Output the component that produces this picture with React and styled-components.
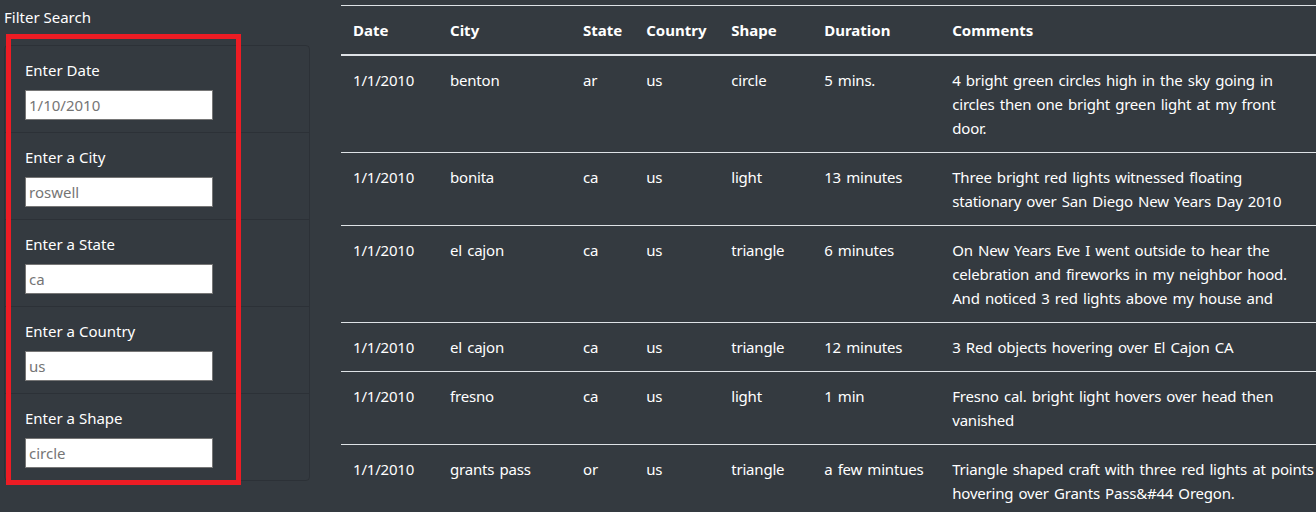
import React from "react";
import styled, { createGlobalStyle } from "styled-components";

const Global = createGlobalStyle`
  html, body { margin: 0; padding: 0; background: #343a40; overflow: hidden; }
  body { font-family: "Noto Sans", "Open Sans", sans-serif; font-size: 15px; line-height: 24px; color: #fff; }
  * { box-sizing: border-box; }
`;

const Page = styled.div`
  display: flex;
  align-items: flex-start;
  padding: 5px 0 0 4px;
  width: 1400px;
`;

const Sidebar = styled.aside`
  position: relative;
  width: 306px;
  flex: none;
`;

const SideTitle = styled.div`
  color: #fff;
  margin-bottom: 16px;
`;

const ListGroup = styled.ul`
  list-style: none;
  margin: 0;
  padding: 0;
  border: 1px solid rgba(0, 0, 0, 0.14);
  border-radius: 4px;
`;

const ListItem = styled.li`
  padding: 12px 20px;
  border-top: ${(p) => (p.$first ? "none" : "1px solid rgba(0,0,0,0.14)")};
`;

const Label = styled.label`
  display: block;
  margin-bottom: 8px;
  color: #fff;
`;

const Input = styled.input`
  display: block;
  width: 188px;
  height: 30px;
  padding: 1px 3px;
  border: 1px solid #767676;
  background: #fff;
  font-family: inherit;
  font-size: 15px;
  color: #333;
  &::placeholder { color: #757575; }
`;

const Highlight = styled.div`
  position: absolute;
  left: 2px;
  top: 29px;
  width: 235px;
  height: 451px;
  border: 5px solid #ed1c24;
  pointer-events: none;
`;

const Main = styled.main`
  margin-left: 31px;
  flex: none;
`;

const Table = styled.table`
  border-collapse: collapse;
  table-layout: fixed;
  color: #fff;
`;

const Th = styled.th`
  text-align: left;
  font-weight: 700;
  padding: 12px;
  vertical-align: bottom;
  border-top: 1px solid #dee2e6;
  border-bottom: 2px solid #dee2e6;
`;

const Td = styled.td`
  padding: 12px;
  vertical-align: top;
  word-spacing: 1.5px;
  letter-spacing: -0.2px;
  border-top: 1px solid #dee2e6;
`;

const fields = [
  { label: "Enter Date", ph: "1/10/2010" },
  { label: "Enter a City", ph: "roswell" },
  { label: "Enter a State", ph: "ca" },
  { label: "Enter a Country", ph: "us" },
  { label: "Enter a Shape", ph: "circle" },
];

const cols = [
  ["Date", 97],
  ["City", 133],
  ["State", 63],
  ["Country", 85],
  ["Shape", 93],
  ["Duration", 128],
  ["Comments", 386],
];

const rows = [
  ["1/1/2010", "benton", "ar", "us", "circle", "5 mins.", "4 bright green circles high in the sky going in circles then one bright green light at my front door."],
  ["1/1/2010", "bonita", "ca", "us", "light", "13 minutes", "Three bright red lights witnessed floating stationary over San Diego New Years Day 2010"],
  ["1/1/2010", "el cajon", "ca", "us", "triangle", "6 minutes", "On New Years Eve I went outside to hear the celebration and fireworks in my neighbor hood. And noticed 3 red lights above my house and"],
  ["1/1/2010", "el cajon", "ca", "us", "triangle", "12 minutes", "3 Red objects hovering over El Cajon CA"],
  ["1/1/2010", "fresno", "ca", "us", "light", "1 min", "Fresno cal. bright light hovers over head then vanished"],
  ["1/1/2010", "grants pass", "or", "us", "triangle", "a few mintues", "Triangle shaped craft with three red lights at points hovering over Grants Pass&#44 Oregon."],
];

export default function App() {
  return (
    <>
      <Global />
      <Page>
        <Sidebar>
          <SideTitle>Filter Search</SideTitle>
          <ListGroup>
            {fields.map((f, i) => (
              <ListItem key={f.label} $first={i === 0}>
                <Label>{f.label}</Label>
                <Input type="text" placeholder={f.ph} />
              </ListItem>
            ))}
          </ListGroup>
          <Highlight />
        </Sidebar>
        <Main>
          <Table>
            <colgroup>
              {cols.map(([n, w]) => (
                <col key={n} style={{ width: w }} />
              ))}
            </colgroup>
            <thead>
              <tr>
                {cols.map(([n]) => (
                  <Th key={n}>{n}</Th>
                ))}
              </tr>
            </thead>
            <tbody>
              {rows.map((r, i) => (
                <tr key={i}>
                  {r.map((c, j) => (
                    <Td key={j}>{c}</Td>
                  ))}
                </tr>
              ))}
            </tbody>
          </Table>
        </Main>
      </Page>
    </>
  );
}
